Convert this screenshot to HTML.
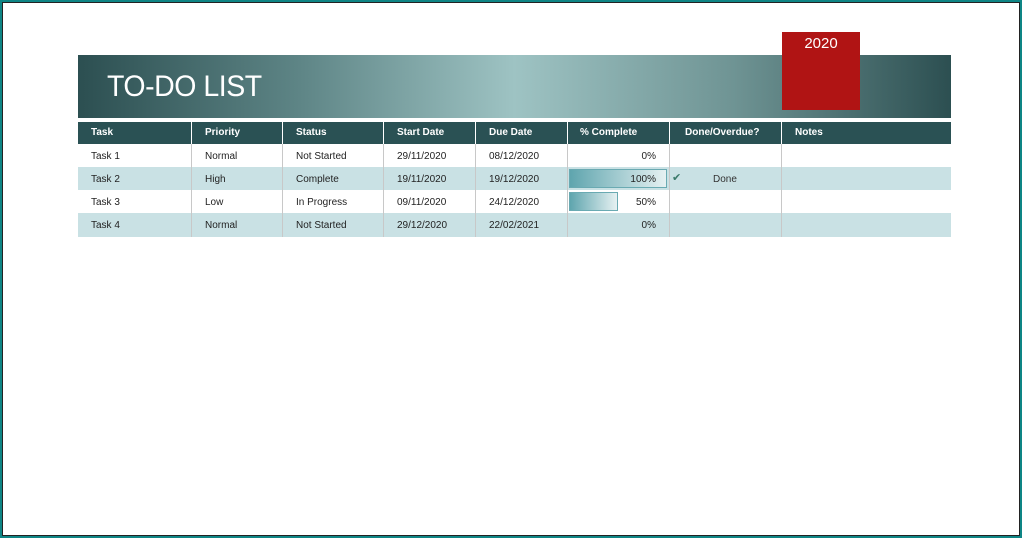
<!DOCTYPE html>
<html><head><style>
body{margin:0;width:1024px;height:540px;overflow:hidden;background:#fff;font-family:"Liberation Sans",sans-serif;}
.frame{position:absolute;left:0;top:0;width:1018px;height:534px;border:2px solid #0e8585;box-shadow:inset 0 0 0 1px #222;}
.banner{position:absolute;left:78px;top:55px;width:873px;height:63px;background:linear-gradient(90deg,#2c4f51 0%,#5d8485 25%,#9ec3c3 50%,#6f9494 75%,#2c4f51 100%);}
.title{position:absolute;left:107px;top:70px;color:#fff;font-size:30px;letter-spacing:-0.5px;transform:scaleX(0.95);transform-origin:left;}
.red{position:absolute;left:782px;top:32px;width:78px;height:78px;background:#b01414;color:#fff;font-size:15px;text-align:center;line-height:24px;}
.cell{position:absolute;font-size:10px;color:#222;box-sizing:border-box;padding-left:13px;}
.hd{color:#fff;font-weight:bold;}
</style></head><body>
<div class="frame"></div>
<div class="banner"></div>
<div class="title">TO-DO LIST</div>
<div class="red">2020</div>
<div id="t"></div>
<script>
var cols=[78,192,283,384,476,568,670,782,951];
var rows=[[122,144],[144,167],[167,190],[190,213],[213,237]];
var data=[["Task","Priority","Status","Start Date","Due Date","% Complete","Done/Overdue?","Notes"],
["Task 1","Normal","Not Started","29/11/2020","08/12/2020","0%","",""],
["Task 2","High","Complete","19/11/2020","19/12/2020","100%","Done",""],
["Task 3","Low","In Progress","09/11/2020","24/12/2020","50%","",""],
["Task 4","Normal","Not Started","29/12/2020","22/02/2021","0%","",""]];
var h="";
rows.forEach(function(r,i){
 var bg=i==0?"#2a5154":(i%2==0?"#c9e1e4":"#fff");
 h+='<div style="position:absolute;left:78px;top:'+r[0]+'px;width:873px;height:'+(r[1]-r[0])+'px;background:'+bg+'"></div>';
 if(i==2)h+='<div style="position:absolute;left:569px;top:169px;width:98px;height:19px;background:linear-gradient(90deg,#5fa5ae,#e6f1f2);border:1px solid #6aaab2;box-sizing:border-box"></div>';
 if(i==3)h+='<div style="position:absolute;left:569px;top:192px;width:49px;height:19px;background:linear-gradient(90deg,#5fa5ae,#e6f1f2);border:1px solid #6aaab2;box-sizing:border-box"></div>';
 for(var c=0;c<8;c++){
  var w=cols[c+1]-cols[c];var txt=data[i][c];var st="";
  if(c==5&&i>0){st="text-align:right;padding-right:14px;";}
  if(c==6&&i>0){st="padding-left:43px;color:#333";}
  if(i==0&&c==5)st="padding-left:12px";
  if(i==0&&c==6)st="padding-left:15px";
  h+='<div class="cell'+(i==0?' hd':'')+'" style="left:'+cols[c]+'px;top:'+(r[0]+1)+'px;width:'+w+'px;height:'+(r[1]-r[0]-1)+'px;line-height:'+(i==0?19:(r[1]-r[0]))+'px;'+st+'">'+txt+'</div>';
  if(c>0)h+='<div style="position:absolute;left:'+(cols[c]-1)+'px;top:'+r[0]+'px;width:1px;height:'+(r[1]-r[0])+'px;background:'+(i==0?'#fff':'#c8c8c8')+'"></div>';
 }
});
h+='<div style="position:absolute;left:672px;top:171px;color:#3a7a6a;font-size:11px">&#10004;</div>';
document.getElementById("t").innerHTML=h;
</script>
</body></html>
